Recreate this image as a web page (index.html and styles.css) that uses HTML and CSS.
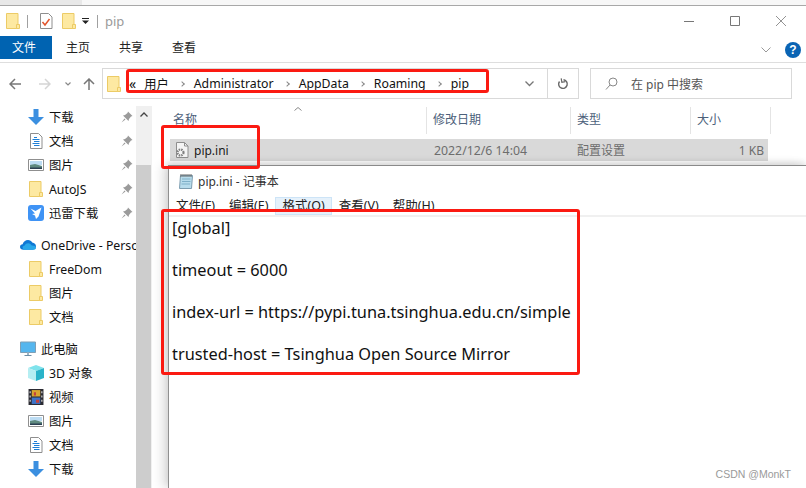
FILE: index.html
```html
<!DOCTYPE html>
<html lang="zh-CN">
<head>
<meta charset="utf-8">
<title>pip</title>
<link rel="stylesheet" href="styles.css">
</head>
<body>
<svg class="defs" width="0" height="0" aria-hidden="true">
  <symbol id="folder" viewBox="0 0 14 16">
    <path d="M.5.500h11.500v15H.5z" fill="#fde9a2" stroke="#eccb66"/>
    <path d="M10.500 11.500h3v4h-3z" fill="#fde9a2" stroke="#eccb66"/>
  </symbol>
  <symbol id="down" viewBox="0 0 16 16">
    <path d="M5.500 0h5v8H16l-8 8-8-8h5.500z" fill="#3b8fe0"/>
  </symbol>
  <symbol id="doc" viewBox="0 0 14 16">
    <path d="M1.500.5h8l3.500 3.500v11.500h-11.500z" fill="#fff" stroke="#8e8e8e"/>
    <path d="M5 4.500h3M3.500 6.500h7M5 8.500h5.500M3.500 10.500h7M5 12.500h5.500" stroke="#1f7fd6" fill="none"/>
  </symbol>
  <symbol id="pic" viewBox="0 0 16 14">
    <path d="M.5 1.500h15v11H.5z" fill="#fff" stroke="#8f8f8f"/>
    <path d="M2 3h12v4H2z" fill="#bcdcf3"/>
    <path d="M2 7l5-1 7 2v3H2z" fill="#5f8a80"/>
    <path d="M2 9.500h12V11H2z" fill="#2c3f52"/>
  </symbol>
  <symbol id="pin" viewBox="0 0 12 12">
    <path d="M7 .5l4.500 4.500-1.500.5-2 2.500-.5 2L2 4.500l2-.5 2.500-2z" fill="#9b9b9b"/>
    <path d="M3.500 7.500L.5 11.500l4-3z" fill="#9b9b9b"/>
  </symbol>
  <symbol id="thunder" viewBox="0 0 16 16">
    <rect width="16" height="16" rx="3" fill="#3f93f5"/>
    <path d="M2.500 3.500l5 2.500L13.500 2.500l-3 9-2.500 2.500-1-3.500-3-1.500 3-.5z" fill="#fff"/>
  </symbol>
  <symbol id="cloud" viewBox="0 0 17 11">
    <path d="M3.500 10.500C1.500 10.500 0 9.300 0 7.600c0-1.600 1.200-2.700 2.800-2.800C3.500 2 5.800.3 8.500.3c2 0 3.700 1 4.500 2.600 2.200.2 4 1.900 4 4 0 2-1.500 3.600-3.500 3.600z" fill="#0f78d4"/>
    <path d="M5 10.500c-1.300 0-2.300-1-2.300-2.300S3.700 6 5 5.900c.7-1.500 2-2.300 3.600-2.300 1.800 0 3.200 1 3.800 2.500 1.500-.3 4.600.6 4.600 2.500-.2 1-.8 1.900-3.500 1.900z" fill="#28a8ea"/>
  </symbol>
  <symbol id="pc" viewBox="0 0 16 16">
    <path d="M.5 1h15v10.500H.5z" fill="#55b6ee" stroke="#7f9fb5"/>
    <path d="M4.500 14h7v1h-7z" fill="#6d8ea5"/>
    <path d="M7 11.500h2V14H7z" fill="#9cb4c4"/>
  </symbol>
  <symbol id="cube" viewBox="0 0 16 16">
    <path d="M8 0l8 3-8 3-8-3z" fill="#7fe3ec"/>
    <path d="M0 3l8 3v10l-8-3z" fill="#b5eef2"/>
    <path d="M16 3L8 6v10l8-3z" fill="#2ab3c9"/>
  </symbol>
  <symbol id="film" viewBox="0 0 14 15">
    <path d="M0 0h14v15H0z" fill="#2b2b33"/>
    <path d="M3 1h8v6H3z" fill="#d8a62f"/>
    <path d="M3 8h8v6H3z" fill="#3d74c8"/>
    <path d="M5 3h2v3H5zM7 10h3v3H7z" fill="#c2423d"/>
    <path d="M1 2h1v2H1zM1 6h1v2H1zM1 10h1v2H1zM12 2h1v2h-1zM12 6h1v2h-1zM12 10h1v2h-1z" fill="#e8e8e8"/>
  </symbol>
  <symbol id="gearfile" viewBox="0 0 14 16">
    <path d="M1.500.5h8l3.500 3.500v11.500h-11.500z" fill="#f4f4f4" stroke="#8e8e8e"/>
    <path d="M9.500.5V4H13" fill="none" stroke="#8e8e8e"/>
    <circle cx="5.500" cy="10.500" r="3" fill="none" stroke="#808080" stroke-width="2.200" stroke-dasharray="1.500 .9"/>
    <circle cx="5.500" cy="10.500" r="1" fill="#f4f4f4"/>
  </symbol>
  <symbol id="note" viewBox="0 0 16 16">
    <path d="M2.500 2.500h12l-1 13h-12z" fill="#b8dcec" stroke="#7d9db0"/>
    <path d="M4 6h8.500M4 8.500h8.500M3.500 11h8.500" stroke="#7fb0c8"/>
    <path d="M3 1v3M5 1v3M7 1v3M9 1v3M11 1v3M13 1v3" stroke="#666"/>
  </symbol>
</svg>

<div class="topstrip"></div>

<section class="window explorer">
  <header class="titlebar">
    <svg class="ico16"><use href="#folder"/></svg>
    <span class="vsep"></span>
    <svg class="ico16 qa-doc" viewBox="0 0 14 16">
      <path d="M1.500.5h8l3.500 3.500v11.500h-11.500z" fill="#fff" stroke="#8e8e8e"/>
      <path d="M3.500 9l2.500 3 4.500-6" fill="none" stroke="#e2562d" stroke-width="1.500"/>
    </svg>
    <svg class="ico16 qa-folder"><use href="#folder"/></svg>
    <svg class="qa-caret" width="7" height="6" viewBox="0 0 7 6"><path d="M0 0h7v1H0zM0 2.500h7L3.500 6z" fill="#222"/></svg>
    <span class="vsep sep2"></span>
    <span class="wintitle">pip</span>
    <div class="wincontrols">
      <svg width="10" height="10" viewBox="0 0 10 10"><path d="M0 5.500h10" stroke="#777"/></svg>
      <svg width="10" height="10" viewBox="0 0 10 10"><path d="M.5.500h9v9h-9z" fill="none" stroke="#777"/></svg>
      <svg width="10" height="10" viewBox="0 0 10 10"><path d="M0 0l10 10M10 0L0 10" stroke="#777" stroke-width=".8"/></svg>
    </div>
  </header>

  <nav class="ribbon">
    <span class="tab tab-file">文件</span>
    <span class="tab">主页</span>
    <span class="tab">共享</span>
    <span class="tab">查看</span>
    <svg class="ribbon-chev" width="10" height="6" viewBox="0 0 10 6"><path d="M.5.500L5 5 9.500.500" fill="none" stroke="#999"/></svg>
    <span class="help">?</span>
  </nav>

  <div class="addressrow">
    <svg class="nav" width="12" height="12" viewBox="0 0 12 12"><path d="M12 6H1M6 1L1 6l5 5" fill="none" stroke="#777" stroke-width="1.500"/></svg>
    <svg class="nav nav-fwd" width="12" height="12" viewBox="0 0 12 12"><path d="M0 6h11M6 1l5 5-5 5" fill="none" stroke="#d5d5d5" stroke-width="1.500"/></svg>
    <svg class="nav nav-drop" width="6" height="4" viewBox="0 0 6 4"><path d="M.5.500L3 3 5.500.500" fill="none" stroke="#888" stroke-width="1.200"/></svg>
    <svg class="nav nav-up" width="12" height="12" viewBox="0 0 12 12"><path d="M6 12V1M1 6l5-5 5 5" fill="none" stroke="#777" stroke-width="1.500"/></svg>
    <div class="addressbox">
      <svg class="ico16 addr-folder"><use href="#folder"/></svg>
      <span class="crumb-more">«</span>
      <span class="crumb">用户</span><i class="gt"></i>
      <span class="crumb">Administrator</span><i class="gt"></i>
      <span class="crumb">AppData</span><i class="gt"></i>
      <span class="crumb">Roaming</span><i class="gt"></i>
      <span class="crumb">pip</span>
      <svg class="addr-chev" width="9" height="6" viewBox="0 0 9 6"><path d="M.5.500L4.500 4.500 8.500.500" fill="none" stroke="#777" stroke-width="1.300"/></svg>
    </div>
    <div class="refresh">
      <svg width="12" height="12" viewBox="0 0 12 12"><path d="M6.500 1.800A4.300 4.300 0 1 1 2.500 3.500" fill="none" stroke="#666" stroke-width="1.400"/><path d="M4.500 0v4h3.500" fill="none" stroke="#666" stroke-width="1.200" transform="rotate(-10 6 2)"/></svg>
    </div>
    <div class="searchbox">
      <svg width="13" height="13" viewBox="0 0 13 13"><circle cx="8" cy="5" r="4" fill="none" stroke="#888"/><path d="M5 8l-4 4.500" stroke="#888"/></svg>
      <span>在 pip 中搜索</span>
    </div>
  </div>

  <div class="body">
    <aside class="sidebar">
      <ul class="tree">
        <li class="row"><svg class="ico16"><use href="#down"/></svg><span class="label">下载</span><svg class="pin"><use href="#pin"/></svg></li>
        <li class="row"><svg class="ico16"><use href="#doc"/></svg><span class="label">文档</span><svg class="pin"><use href="#pin"/></svg></li>
        <li class="row"><svg class="ico16"><use href="#pic"/></svg><span class="label">图片</span><svg class="pin"><use href="#pin"/></svg></li>
        <li class="row"><svg class="ico16"><use href="#folder"/></svg><span class="label">AutoJS</span><svg class="pin"><use href="#pin"/></svg></li>
        <li class="row"><svg class="ico16"><use href="#thunder"/></svg><span class="label">迅雷下载</span><svg class="pin"><use href="#pin"/></svg></li>
      </ul>
      <ul class="tree group">
        <li class="row top"><svg class="ico16"><use href="#cloud"/></svg><span class="label">OneDrive - Personal</span></li>
        <li class="row"><svg class="ico16"><use href="#folder"/></svg><span class="label">FreeDom</span></li>
        <li class="row"><svg class="ico16"><use href="#folder"/></svg><span class="label">图片</span></li>
        <li class="row"><svg class="ico16"><use href="#folder"/></svg><span class="label">文档</span></li>
      </ul>
      <ul class="tree group">
        <li class="row top"><svg class="ico16"><use href="#pc"/></svg><span class="label">此电脑</span></li>
        <li class="row"><svg class="ico16"><use href="#cube"/></svg><span class="label">3D 对象</span></li>
        <li class="row"><svg class="ico16"><use href="#film"/></svg><span class="label">视频</span></li>
        <li class="row"><svg class="ico16"><use href="#pic"/></svg><span class="label">图片</span></li>
        <li class="row"><svg class="ico16"><use href="#doc"/></svg><span class="label">文档</span></li>
        <li class="row"><svg class="ico16"><use href="#down"/></svg><span class="label">下载</span></li>
      </ul>
    </aside>
    <div class="scrollbar">
      <span class="scrollbtn"><svg width="8" height="5" viewBox="0 0 8 5"><path d="M.5 4.500L4 1l3.500 3.500" fill="none" stroke="#444" stroke-width="1.300"/></svg></span>
      <span class="scrollthumb"></span>
    </div>
    <main class="files">
      <div class="columns">
        <span class="col col-name">名称<svg class="sort" width="8" height="4" viewBox="0 0 8 4"><path d="M.5 3.500L4 .5l3.500 3" fill="none" stroke="#888"/></svg></span>
        <span class="col col-date">修改日期</span>
        <span class="col col-type">类型</span>
        <span class="col col-size">大小</span>
      </div>
      <div class="filerow">
        <span class="cell col-name"><svg class="ico16"><use href="#gearfile"/></svg><b class="fname">pip.ini</b></span>
        <span class="cell col-date">2022/12/6 14:04</span>
        <span class="cell col-type">配置设置</span>
        <span class="cell col-size num">1 KB</span>
      </div>
    </main>
  </div>
</section>

<section class="window notepad">
  <header class="np-title">
    <svg class="ico16"><use href="#note"/></svg>
    <span>pip.ini - 记事本</span>
  </header>
  <nav class="np-menu">
    <span class="m">文件(F)</span>
    <span class="m">编辑(E)</span>
    <span class="m active">格式(O)</span>
    <span class="m">查看(V)</span>
    <span class="m">帮助(H)</span>
  </nav>
  <pre class="np-text">[global]

timeout = 6000

index-url = https://pypi.tuna.tsinghua.edu.cn/simple

trusted-host = Tsinghua Open Source Mirror</pre>
</section>

<div class="mark mark-addr"></div>
<div class="mark mark-file"></div>
<div class="mark mark-text"></div>
<div class="watermark">CSDN @MonkT</div>
</body>
</html>
```

FILE: styles.css
```css
* { box-sizing: border-box; }
html, body { margin: 0; padding: 0; }
body {
  position: relative;
  width: 806px;
  height: 488px;
  overflow: hidden;
  background: #fff;
  font-family: "Noto Sans", "Noto Sans CJK SC", sans-serif;
  font-size: 12px;
  color: #111;
}
.defs { position: absolute; }
ul { list-style: none; margin: 0; padding: 0; }
.ico16 { width: 16px; height: 16px; flex: none; display: block; }

.topstrip { height: 5px; background: linear-gradient(90deg, #e8e8e8 0 82px, #f7f7f7 82px); }

.window { position: absolute; background: #fff; }
.explorer {
  left: 0; top: 5px; width: 806px; height: 483px;
  border-top: 1px solid #a8a8a8;
  display: flex; flex-direction: column;
}

.titlebar { height: 30px; display: flex; align-items: center; padding-left: 5px; flex: none; }
.vsep { width: 1px; height: 13px; background: #a0a0a0; margin-left: 6px; }
.qa-doc { margin-left: 10px; }
.qa-folder { margin-left: 7px; }
.qa-caret { margin-left: 5px; }
.sep2 { margin-left: 8px; }
.wintitle { margin-left: 7px; font-size: 13px; color: #9a9a9a; }
.wincontrols { margin-left: auto; display: flex; gap: 36px; padding-right: 20px; }
.wincontrols svg { display: block; }

.ribbon {
  height: 27px; flex: none;
  display: flex; align-items: flex-start;
  border-bottom: 1px solid #dedede;
  position: relative;
}
.tab { height: 23px; line-height: 23px; padding-left: 14px; width: 53px; font-size: 12px; color: #222; }
.tab-file { width: 52px; padding-left: 12px; background: #0063b1; color: #fff; }
.ribbon-chev { margin-left: auto; margin-top: 11px; margin-right: 14px; }
.help {
  width: 16px; height: 16px; border-radius: 50%;
  background: #0a64b4; color: #fff; margin-right: 5px; margin-top: 6px;
  font: bold 12px/16px "Liberation Sans", sans-serif; text-align: center;
}

.addressrow { height: 37px; flex: none; display: flex; align-items: center; padding: 5px 0 1px 9px; }
.nav { display: block; flex: none; }
.nav-fwd { margin-left: 18px; }
.nav-drop { margin-left: 14px; }
.nav-up { margin-left: 12px; }
.addressbox {
  margin-left: 7px; width: 445px; height: 31px;
  border: 1px solid #d9d9d9; border-right: 0;
  display: flex; align-items: center; font-size: 12.300px; color: #111;
}
.addr-folder { margin-left: 3px; }
.crumb-more { margin-left: 7px; font-size: 14px; line-height: 14px; margin-right: 8px; }
.crumb { color: #111; }
.gt {
  width: 4px; height: 4px; margin: 0 10px 0 11px; flex: none;
  border-top: 1.500px solid #888; border-right: 1.500px solid #888;
  transform: rotate(45deg);
}
.addr-chev { margin-left: auto; margin-right: 13px; }
.refresh {
  width: 32px; height: 31px; border: 1px solid #d9d9d9;
  display: flex; align-items: center; justify-content: center;
}
.searchbox {
  margin-left: 11px; width: 202px; height: 31px;
  border: 1px solid #d9d9d9; display: flex; align-items: center;
  padding-left: 14px; gap: 13px; color: #555; font-size: 12px;
}

.body { flex: 1; display: flex; min-height: 0; padding-top: 5px; }
.sidebar { width: 136px; flex: none; overflow: hidden; }
.row { height: 24px; display: flex; align-items: center; padding-left: 28px; position: relative; white-space: nowrap; }
.row.top { padding-left: 20px; }
.row .label { margin-left: 5px; font-size: 12.300px; }
.group { margin-top: 8px; }
.pin { width: 12px; height: 12px; position: absolute; left: 121px; top: 6px; }

.scrollbar { width: 16px; flex: none; background: #f0f0f0; display: flex; flex-direction: column; margin-top: 1px; }
.scrollbtn { height: 59px; display: flex; align-items: flex-start; justify-content: center; padding-top: 6px; }
.scrollbtn svg { display: block; }
.scrollthumb { flex: 1; background: #cdcdcd; margin-right: 1px; }

.files { flex: 1; min-width: 0; }
.columns { height: 27px; margin-top: 2px; display: flex; padding-left: 18px; color: #4c607a; font-size: 12px; align-items: center; }
.col, .cell { flex: none; }
.col-name { width: 257px; position: relative; }
.col-date { width: 144px; }
.col-type { width: 120px; }
.col-size { width: 80px; }
.columns .col { height: 27px; line-height: 25px; padding-left: 6px; border-right: 1px solid #e4e4e4; }
.columns .col-name { padding-left: 3px; }
.sort { position: absolute; left: 124px; top: 0; }
.filerow {
  margin: 5px 0 0 18px; width: 598px; height: 22px;
  background: #d9d9d9; display: flex; align-items: center; color: #6d6d6d;
}
.filerow .cell { display: flex; align-items: center; }
.filerow .col-name { width: 264px; padding-left: 4px; gap: 4px; }
.filerow .col-date { width: 143px; font-size: 12.300px; }
.filerow .col-type { width: 120px; }
.filerow .col-size { width: 67px; justify-content: flex-end; }
.fname { font-weight: 400; color: #1a1a1a; font-size: 12px; }

.notepad {
  left: 168px; top: 165px; width: 638px; height: 323px;
  border-top: 1px solid #8a8a8a; border-left: 1px solid #8f8f8f;
  box-shadow: -6px 0 10px rgba(0, 0, 0, .12), 0 -3px 6px rgba(0, 0, 0, .10);
  display: flex; flex-direction: column;
}
.np-title { height: 30px; flex: none; display: flex; align-items: center; gap: 4px; padding-left: 9px; font-size: 12px; color: #333; }
.np-menu {
  height: 21px; flex: none; display: flex; align-items: flex-start;
  border-bottom: 2px solid #f0f0f0; font-size: 12.500px; color: #222;
}
.m { padding: 0 7px; line-height: 18px; height: 18px; margin-top: 1px; }
.m.active { background: #e5f1fb; box-shadow: inset 0 0 0 1px #cde4f7; }
.np-text {
  margin: 0; padding: 1px 0 0 3px;
  font-family: "Noto Sans", "Noto Sans CJK SC", sans-serif;
  font-size: 16.330px; line-height: 21px; color: #111;
}

.mark { position: absolute; border: 3px solid #fb1a12; border-radius: 3px; }
.mark-addr { left: 126px; top: 69px; width: 363px; height: 24px; }
.mark-file { left: 161px; top: 125px; width: 99px; height: 44px; }
.mark-text { left: 161px; top: 209px; width: 419px; height: 166px; }
.watermark {
  position: absolute; right: 15px; bottom: 8px;
  font: 10.500px "Liberation Sans", sans-serif; color: #9a9a9a;
}
```
